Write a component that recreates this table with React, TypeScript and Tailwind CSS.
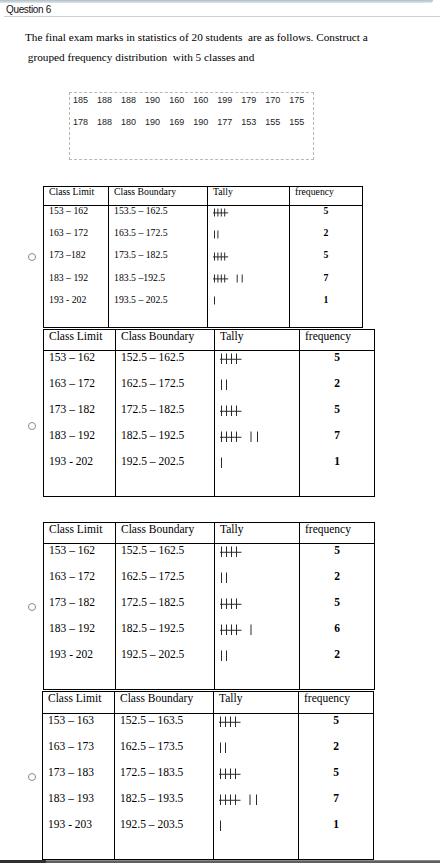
import React from "react";

type Row = { limit: string; boundary: string; tally: [number, number]; freq: string };

type TableSpec = {
  rows: Row[];
  small: boolean;
  widths: [number, number, number, number];
  headerClass: string;
  bodyClass: string;
  rowClass: string;
};

const serif = { fontFamily: '"Liberation Serif", "Times New Roman", serif' };
const sans = { fontFamily: '"Liberation Sans", Arial, sans-serif' };

function Tally({ count, extra, small }: { count: number; extra: number; small: boolean }) {
  const gap = small ? 3.4 : 5;
  const h = small ? 8 : 10.5;
  const lines: React.ReactElement[] = [];
  const x = 1.5;
  for (let i = 0; i < count; i++) {
    lines.push(<line key={"g" + i} x1={x + i * gap} y1={0.5} x2={x + i * gap} y2={0.5 + h} stroke="#2a2a2a" strokeWidth={1} />);
  }
  const groupEnd = count > 0 ? x + (count - 1) * gap : 0;
  if (count > 0) {
    lines.push(
      <line key="strike" x1={0} y1={0.5 + h * 0.55} x2={groupEnd + (small ? 3.5 : 5)} y2={0.5 + h * 0.55} stroke="#2a2a2a" strokeWidth={1} />
    );
  }
  const extraStart = count > 0 ? groupEnd + (small ? 12.5 : 14.5) : x;
  const extraGap = count > 0 ? (small ? 5 : 6.5) : gap;
  for (let i = 0; i < extra; i++) {
    lines.push(
      <line key={"e" + i} x1={extraStart + i * extraGap} y1={0.5} x2={extraStart + i * extraGap} y2={0.5 + h} stroke="#2a2a2a" strokeWidth={1} />
    );
  }
  return (
    <svg width={48} height={h + 1} className="block">
      {lines}
    </svg>
  );
}

function FreqTable({ spec }: { spec: TableSpec }) {
  const [w1, w2, w3, w4] = spec.widths;
  const text = spec.small ? "text-[9.75px] leading-[10px]" : "text-[11.5px] leading-[13px]";
  const col = (w: number, last: boolean, children: React.ReactNode, extra = "") => (
    <div className={(last ? "" : "border-r border-black ") + "shrink-0 pl-[5px] " + extra} style={{ width: w }}>
      {children}
    </div>
  );
  return (
    <div className={"border border-black text-black " + text} style={serif}>
      <div className={"flex border-b border-black " + spec.headerClass}>
        {col(w1, false, "Class Limit")}
        {col(w2, false, "Class Boundary")}
        {col(w3, false, "Tally")}
        {col(w4, true, "frequency")}
      </div>
      <div className={"flex " + spec.bodyClass}>
        {col(
          w1,
          false,
          spec.rows.map((r, i) => (
            <div key={i} className={spec.rowClass}>
              {r.limit}
            </div>
          ))
        )}
        {col(
          w2,
          false,
          spec.rows.map((r, i) => (
            <div key={i} className={spec.rowClass}>
              {r.boundary}
            </div>
          ))
        )}
        {col(
          w3,
          false,
          spec.rows.map((r, i) => (
            <div key={i} className={spec.rowClass + " pt-[1.5px]"}>
              <Tally count={r.tally[0]} extra={r.tally[1]} small={spec.small} />
            </div>
          ))
        )}
        {col(
          w4,
          true,
          spec.rows.map((r, i) => (
            <div key={i} className={spec.rowClass + " text-center font-bold pr-[5px]"}>
              {r.freq}
            </div>
          ))
        )}
      </div>
    </div>
  );
}

function Radio({ className }: { className: string }) {
  return <div className={"w-[8px] h-[8px] rounded-full border border-[#8c8c8c] bg-white " + className} />;
}

const optA: Row[] = [
  { limit: "153 \u2013 162", boundary: "153.5 \u2013 162.5", tally: [4, 0], freq: "5" },
  { limit: "163 \u2013 172", boundary: "163.5 \u2013 172.5", tally: [0, 2], freq: "2" },
  { limit: "173 \u2013182", boundary: "173.5 \u2013 182.5", tally: [4, 0], freq: "5" },
  { limit: "183 \u2013 192", boundary: "183.5 \u2013192.5", tally: [4, 2], freq: "7" },
  { limit: "193 - 202", boundary: "193.5 \u2013 202.5", tally: [0, 1], freq: "1" },
];
const optB: Row[] = [
  { limit: "153 \u2013 162", boundary: "152.5 \u2013 162.5", tally: [4, 0], freq: "5" },
  { limit: "163 \u2013 172", boundary: "162.5 \u2013 172.5", tally: [0, 2], freq: "2" },
  { limit: "173 \u2013 182", boundary: "172.5 \u2013 182.5", tally: [4, 0], freq: "5" },
  { limit: "183 \u2013 192", boundary: "182.5 \u2013 192.5", tally: [4, 2], freq: "7" },
  { limit: "193 - 202", boundary: "192.5 \u2013 202.5", tally: [0, 1], freq: "1" },
];
const optC: Row[] = [
  { limit: "153 \u2013 162", boundary: "152.5 \u2013 162.5", tally: [4, 0], freq: "5" },
  { limit: "163 \u2013 172", boundary: "162.5 \u2013 172.5", tally: [0, 2], freq: "2" },
  { limit: "173 \u2013 182", boundary: "172.5 \u2013 182.5", tally: [4, 0], freq: "5" },
  { limit: "183 \u2013 192", boundary: "182.5 \u2013 192.5", tally: [4, 1], freq: "6" },
  { limit: "193 - 202", boundary: "192.5 \u2013 202.5", tally: [0, 2], freq: "2" },
];
const optD: Row[] = [
  { limit: "153 \u2013 163", boundary: "152.5 \u2013 163.5", tally: [4, 0], freq: "5" },
  { limit: "163 \u2013 173", boundary: "162.5 \u2013 173.5", tally: [0, 2], freq: "2" },
  { limit: "173 \u2013 183", boundary: "172.5 \u2013 183.5", tally: [4, 0], freq: "5" },
  { limit: "183 \u2013 193", boundary: "182.5 \u2013 193.5", tally: [4, 2], freq: "7" },
  { limit: "193 - 203", boundary: "192.5 \u2013 203.5", tally: [0, 1], freq: "1" },
];

const bigWidths: [number, number, number, number] = [72, 99, 85, 74];

const specA: TableSpec = {
  rows: optA,
  small: true,
  widths: [65, 99, 82, 72],
  headerClass: "h-[19px]",
  bodyClass: "h-[122px] border-b border-black -mb-px",
  rowClass: "h-[22.2px]",
};
const specBig = (rows: Row[], header: string): TableSpec => ({
  rows,
  small: false,
  widths: bigWidths,
  headerClass: header,
  bodyClass: "h-[145px]",
  rowClass: "h-[26px]",
});

const numbers1 = ["185", "188", "188", "190", "160", "160", "199", "179", "170", "175"];
const numbers2 = ["178", "188", "180", "190", "169", "190", "177", "153", "155", "155"];

export default function App() {
  return (
    <div className="w-[440px] h-[863px] bg-white overflow-hidden flex flex-col">
      <div className="h-[3px] mr-[7px] rounded-br-[3px] bg-gradient-to-b from-[#aebfc8] to-[#dfe7eb] shrink-0" />
      <div
        className="ml-[4px] pl-[2px] h-[14px] border-b border-[#cfcfcf] text-[10px] leading-[13px] text-[#111] tracking-[-0.35px] shrink-0"
        style={sans}
      >
        Question 6
      </div>
      <div className="mt-[10px] pl-[25px] text-[11.25px] leading-[20px] text-black shrink-0" style={serif}>
        <div>The final exam marks in statistics of 20 students{"\u00a0"} are as follows. Construct a</div>
        <div>{"\u00a0"}grouped frequency distribution{"\u00a0"} with 5 classes and</div>
      </div>
      <div className="mt-[25px] ml-[69px] w-[245px] h-[68px] border border-dashed border-[#b8b8b8] pl-[3px] pt-[2px] shrink-0 text-[9px] leading-[11px] text-[#222]" style={sans}>
        <div className="flex gap-[9px] h-[22.4px]">
          {numbers1.map((n, i) => (
            <span key={i}>{n}</span>
          ))}
        </div>
        <div className="flex gap-[9px] h-[22.4px]">
          {numbers2.map((n, i) => (
            <span key={i}>{n}</span>
          ))}
        </div>
      </div>

      <div className="mt-[26px] flex shrink-0">
        <div className="w-[43px] pl-[28px] shrink-0">
          <Radio className="mt-[66.5px]" />
        </div>
        <FreqTable spec={specA} />
      </div>
      <div className="mt-px flex shrink-0">
        <div className="w-[43px] pl-[28px] shrink-0">
          <Radio className="mt-[93px]" />
        </div>
        <FreqTable spec={specBig(optB, "h-[21px]")} />
      </div>
      <div className="mt-[25px] flex shrink-0">
        <div className="w-[43px] pl-[28px] shrink-0">
          <Radio className="mt-[81px]" />
        </div>
        <FreqTable spec={specBig(optC, "h-[21px]")} />
      </div>
      <div className="mt-[1px] flex shrink-0">
        <div className="w-[42px] pl-[28px] shrink-0">
          <Radio className="mt-[82px]" />
        </div>
        <FreqTable spec={specBig(optD, "h-[22px]")} />
      </div>
      <div className="mt-auto h-[3px] flex shrink-0">
        <div className="w-[46px] bg-[#2e2e2e]" />
        <div className="flex-1 bg-[#5f5f5f] border-t border-[#8a8a8a]" />
      </div>
    </div>
  );
}
